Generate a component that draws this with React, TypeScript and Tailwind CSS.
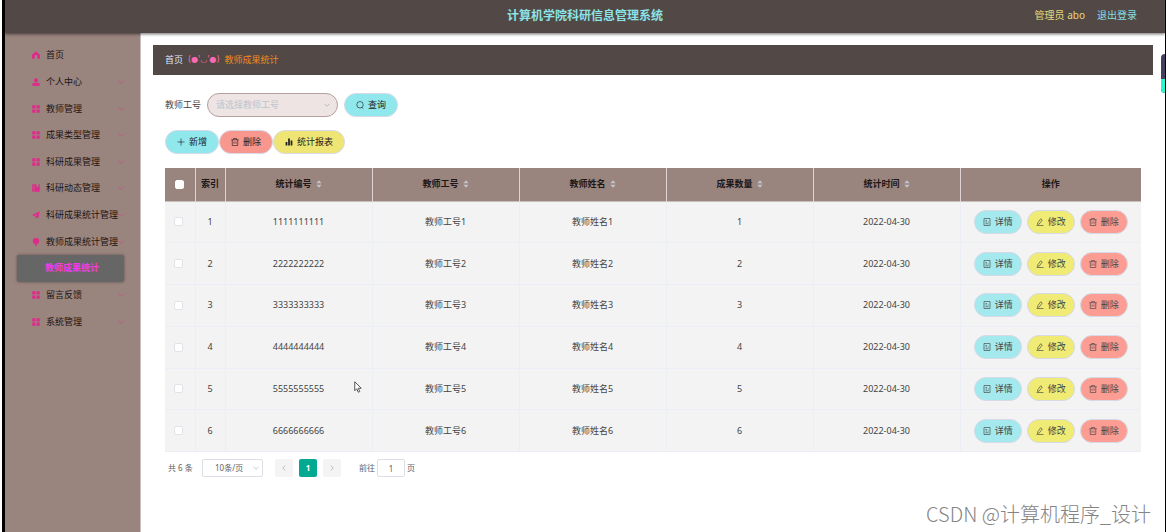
import clsx from "clsx";

const MENU = [
  { text: "首页", icon: "home" },
  { text: "个人中心", icon: "user", expandable: true },
  { text: "教师管理", icon: "grid", expandable: true },
  { text: "成果类型管理", icon: "grid", expandable: true },
  { text: "科研成果管理", icon: "grid", expandable: true },
  { text: "科研动态管理", icon: "book", expandable: true },
  { text: "科研成果统计管理", icon: "plane", expandable: true },
  { text: "教师成果统计管理", icon: "bulb", expandable: true },
  { text: "教师成果统计", active: true },
  { text: "留言反馈", icon: "grid", expandable: true },
  { text: "系统管理", icon: "grid", expandable: true },
];

const COLUMNS = ["统计编号", "教师工号", "教师姓名", "成果数量", "统计时间"];

const ROWS = [1, 2, 3, 4, 5, 6].map((n) => ({
  index: n,
  code: String(n).repeat(10),
  teacherId: `教师工号${n}`,
  teacherName: `教师姓名${n}`,
  count: n,
  date: "2022-04-30",
}));

function MenuIcon({ name }: { name: string }) {
  return (
    <svg viewBox="0 0 16 16" className="size-2 shrink-0 fill-[#e02a8b]">
      {name === "home" && (
        <path d="M8 0.500 0 7.500V15.500H5.500V10.500a2.500 2.500 0 0 1 5 0V15.500H16V7.500z" />
      )}
      {name === "user" && (
        <>
          <circle cx="8" cy="4.500" r="4" />
          <path d="M0.500 15.500v-2.500c0-2 2-3.500 4.500-3.500h6c2.500 0 4.500 1.500 4.500 3.500v2.500z" />
        </>
      )}
      {name === "grid" && (
        <path d="M0.500 0.500H7v6.500H0.500zM9 0.500h6.500v6.500H9zM0.500 9H7v6.500H0.500zM9 9h6.500v6.500H9z" />
      )}
      {name === "book" && (
        <path d="M0.500 0.500h3v15h-3zM4.500 0.500H9v6l2-1.500 2 1.500v-6h2.500v15h-11z" />
      )}
      {name === "plane" && (
        <path d="M15.500 0.500 0.500 8l4 2.500L12 4.500l-5.500 7V15.500l2.500-3 3.500 2z" />
      )}
      {name === "bulb" && (
        <path d="M8 0a6.500 6.500 0 0 1 6.500 6.500c0 2.500-2 4-3.500 5.500H5C3.500 10.500 1.500 9 1.500 6.500A6.500 6.500 0 0 1 8 0zM5.500 13h5L9.500 16h-3z" />
      )}
    </svg>
  );
}

function Chevron({ className }: { className?: string }) {
  return (
    <svg
      viewBox="0 0 12 12"
      className={clsx("size-[6px] shrink-0 fill-none", className)}
      strokeWidth="1.800"
    >
      <path d="M1 3.500 6 8.500 11 3.500" />
    </svg>
  );
}

function ButtonIcon({ name }: { name: string }) {
  return (
    <svg
      viewBox="0 0 16 16"
      className="size-2 shrink-0 fill-none stroke-current"
      strokeWidth="1.300"
    >
      {name === "search" && (
        <>
          <circle cx="8" cy="7.500" r="6.500" />
          <path d="M11.500 12.500 14 15.500" />
        </>
      )}
      {name === "plus" && <path d="M8 1v14M1 8h14" />}
      {name === "trash" && (
        <path d="M0.500 3.500h15M5 3.500V1h6v2.500M2.500 3.500V15h11V3.500M6 7v4.500M10 7v4.500" />
      )}
      {name === "chart" && (
        <path d="M3 15V8M8 15V1M13 15V5" strokeWidth="3.500" />
      )}
      {name === "detail" && (
        <path d="M2 1h12v14H2zM5 5h3M5 8h3M5 11.500h6M9.500 8h2" />
      )}
      {name === "edit" && (
        <path d="M3.500 9.500 9.500 1.500l3 2.500-6 8-3.500 1zM1 15h14" />
      )}
    </svg>
  );
}

interface PillProps {
  color: "cyan" | "red" | "yellow";
  icon: string;
  text: string;
  small?: boolean;
}

function PillButton({ color, icon, text, small }: PillProps) {
  return (
    <button
      type="button"
      className={clsx(
        "flex h-6 items-center justify-center gap-1 rounded-full border border-[#d6dae6] whitespace-nowrap",
        small ? "w-12 text-[#444444]" : "px-[11px] text-[#222222]",
        color === "cyan" && (small ? "bg-[#a4e9ee]" : "bg-[#90e8ed]"),
        color === "red" && (small ? "bg-[#fc9d93]" : "bg-[#f8978d]"),
        color === "yellow" && (small ? "bg-[#f0eb74]" : "bg-[#eee574]")
      )}
    >
      <ButtonIcon name={icon} />
      {text}
    </button>
  );
}

function SortCarets() {
  return (
    <svg viewBox="0 0 8 12" className="h-2 w-[6px] fill-[#c0c4cc]">
      <path d="M4 0.500 8 5H0zM4 11.500 0 7h8z" />
    </svg>
  );
}

function Checkbox({ label, header }: { label: string; header?: boolean }) {
  return (
    <input
      type="checkbox"
      aria-label={label}
      className={clsx(
        "mx-auto block size-[9px] appearance-none rounded-xs border bg-white",
        header ? "border-white" : "border-[#e0e3ea]"
      )}
    />
  );
}

function Header() {
  return (
    <header className="relative z-10 grid h-[33px] grid-cols-[1fr_auto_1fr] items-center bg-[#524946] shadow-[0_1px_3px_rgba(0,0,0,0.6)]">
      <h1 className="col-start-2 pb-[2px] text-[12px] leading-4 font-bold text-[#8ce4e9]">
        计算机学院科研信息管理系统
      </h1>
      <div className="flex justify-end gap-3 pr-7 pb-[3px] text-[10px] leading-4">
        <span className="text-[#e8d67a]">管理员 abo</span>
        <a href="#logout" className="text-[#86dfe5]">
          退出登录
        </a>
      </div>
    </header>
  );
}

function Sidebar() {
  return (
    <nav className="w-[136px] shrink-0 border-r border-[#c9bfbc] bg-[#9a847e] pt-[9px]">
      <ul className="grid h-[293px] auto-rows-fr">
        {MENU.map((item) => (
          <li key={item.text} className="flex px-3">
            <a
              href="#menu"
              className={clsx(
                "flex w-[107px] items-center whitespace-nowrap",
                item.active
                  ? "rounded-xs bg-[#666666] pl-7 font-bold text-[#f03be8] shadow-[0_0_3px_rgba(0,0,0,0.4)]"
                  : "gap-[6px] pl-[15px] text-[#1c1413]"
              )}
            >
              {item.icon && <MenuIcon name={item.icon} />}
              {item.text}
            </a>
            {item.expandable && (
              <Chevron className="-ml-[6px] self-center stroke-[#c9528a]" />
            )}
          </li>
        ))}
      </ul>
    </nav>
  );
}

function DataTable() {
  return (
    <table className="h-[284px] w-full table-fixed border-collapse text-center">
      <colgroup>
        <col className="w-[30px]" />
        <col className="w-[30px]" />
        {COLUMNS.map((column) => (
          <col key={column} />
        ))}
        <col className="w-[181px]" />
      </colgroup>
      <thead>
        <tr className="h-[33px] border-b border-[#c9bfbf] bg-[#9a847e] text-[#1f1817]">
          <th className="border-r border-[#dcd3d2]">
            <Checkbox label="全选" header />
          </th>
          <th className="border-r border-[#dcd3d2]">索引</th>
          {COLUMNS.map((column) => (
            <th key={column} className="border-r border-[#dcd3d2]">
              <div className="flex items-center justify-center gap-1">
                {column}
                <SortCarets />
              </div>
            </th>
          ))}
          <th>操作</th>
        </tr>
      </thead>
      <tbody className="bg-[#f3f3f3] text-[#444444]">
        {ROWS.map((row) => (
          <tr key={row.index} className="border-b border-[#ebeef5]">
            <td className="border-r border-[#ebeef5] pr-[2px]">
              <Checkbox label={`选择${row.index}`} />
            </td>
            <td className="border-r border-[#ebeef5]">{row.index}</td>
            <td className="border-r border-[#ebeef5]">{row.code}</td>
            <td className="border-r border-[#ebeef5]">{row.teacherId}</td>
            <td className="border-r border-[#ebeef5]">{row.teacherName}</td>
            <td className="border-r border-[#ebeef5]">{row.count}</td>
            <td className="border-r border-[#ebeef5]">{row.date}</td>
            <td>
              <div className="flex justify-center gap-[5px]">
                <PillButton color="cyan" icon="detail" text="详情" small />
                <PillButton color="yellow" icon="edit" text="修改" small />
                <PillButton color="red" icon="trash" text="删除" small />
              </div>
            </td>
          </tr>
        ))}
      </tbody>
    </table>
  );
}

function Pagination() {
  return (
    <div className="mt-[7px] flex items-center pl-[3px] text-[8px] text-[#606266]">
      <span className="w-[34px]">共 6 条</span>
      <div className="relative mr-3">
        <select
          aria-label="每页条数"
          className="block h-[18px] w-[61px] appearance-none rounded-xs border border-[#dcdfe6] bg-white pl-3"
        >
          <option>10条/页</option>
        </select>
        <Chevron className="absolute top-[6px] right-1 stroke-[#c0c4cc]" />
      </div>
      <div className="flex gap-[6px]">
        <button
          type="button"
          aria-label="上一页"
          className="flex size-[18px] items-center justify-center rounded-xs bg-[#f4f4f5]"
        >
          <Chevron className="rotate-90 stroke-[#b0b3ba]" />
        </button>
        <button
          type="button"
          className="size-[18px] rounded-xs bg-[#00a98f] font-bold text-white"
        >
          1
        </button>
        <button
          type="button"
          aria-label="下一页"
          className="flex size-[18px] items-center justify-center rounded-xs bg-[#f4f4f5]"
        >
          <Chevron className="-rotate-90 stroke-[#b0b3ba]" />
        </button>
      </div>
      <label className="ml-[18px] flex items-center gap-[2px]">
        前往
        <input
          type="text"
          defaultValue="1"
          className="h-[18px] w-7 rounded-xs border border-[#dcdfe6] bg-white text-center"
        />
        页
      </label>
    </div>
  );
}

export default function App() {
  return (
    <div className="relative ml-[2px] flex min-h-screen flex-col overflow-hidden border-r border-l-[3px] border-black bg-white font-['Noto_Sans','Noto_Sans_CJK_SC',sans-serif] text-[9px] leading-3">
      <Header />
      <div className="flex flex-1">
        <Sidebar />
        <main className="min-w-0 flex-1 p-3">
          <div className="flex h-[30px] items-center gap-[5px] bg-[#524946] px-3">
            <a href="#home" className="text-[#dfe6ff]">
              首页
            </a>
            <span className="font-['DejaVu_Sans',sans-serif] text-[8px] text-[#ff69b4]">
              (●'◡'●)
            </span>
            <span className="text-[#f08a1c]">教师成果统计</span>
          </div>

          <div className="px-3 pt-[18px]">
            <form className="flex items-center gap-[6px] text-[#444444]">
              <label htmlFor="teacher">教师工号</label>
              <div className="relative">
                <select
                  id="teacher"
                  className="block h-6 w-[131px] appearance-none rounded-full border border-[#b5a09e] bg-[#ede4e3] pl-2 text-[#bfc3cc]"
                >
                  <option>请选择教师工号</option>
                </select>
                <Chevron className="absolute top-[9px] right-2 stroke-[#b4b7c0]" />
              </div>
              <PillButton color="cyan" icon="search" text="查询" />
            </form>

            <div className="mt-[13px] mb-[14px] flex">
              <PillButton color="cyan" icon="plus" text="新增" />
              <PillButton color="red" icon="trash" text="删除" />
              <PillButton color="yellow" icon="chart" text="统计报表" />
            </div>

            <DataTable />
            <Pagination />
          </div>
        </main>
      </div>

      {/* scroll marker on the window edge */}
      <div className="absolute top-[54px] right-0 h-[39px] w-1 overflow-hidden rounded-l-sm bg-[#443e63]">
        <div className="mt-[25px] h-[14px] bg-[#2cf5d0]" />
      </div>

      {/* mouse pointer */}
      <svg
        viewBox="0 0 16 24"
        className="absolute top-[381px] left-[349px] h-3 w-2 fill-white stroke-[#555555]"
        strokeWidth="2"
      >
        <path d="M1.500 1.500v18l4-4 3 7 3-1.500-3-6.500h6z" />
      </svg>

      <div className="absolute right-[14px] bottom-1 font-['Noto_Sans_CJK_SC',sans-serif] text-[20px] leading-7 font-light text-[#858585]">
        CSDN @计算机程序_设计
      </div>
    </div>
  );
}
